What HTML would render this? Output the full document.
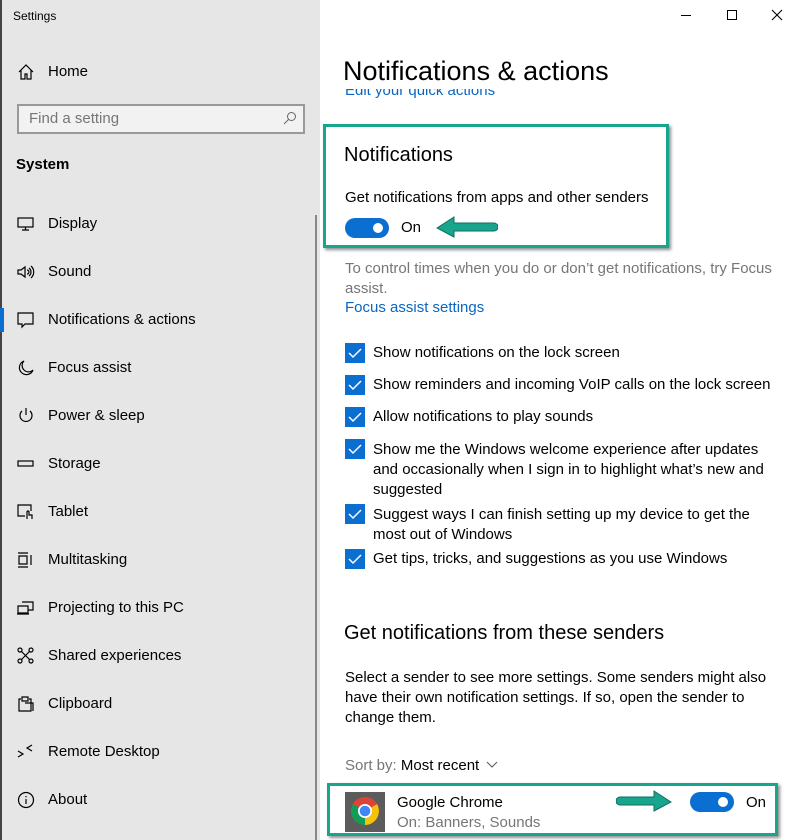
<!DOCTYPE html>
<html><head><meta charset="utf-8"><style>
*{margin:0;padding:0;box-sizing:border-box}
body{width:799px;height:840px;overflow:hidden;background:#fff;font-family:"Liberation Sans",sans-serif;color:#000;position:relative}
.a{position:absolute;white-space:nowrap}
#side{position:absolute;left:0;top:0;width:320px;height:840px;background:#e6e6e6;box-shadow:inset 2px 0 0 #444}
.it{position:absolute;left:48px;font-size:15px;color:#000}
.ic{position:absolute;left:17px;width:18px;height:18px}
.t{font-size:15px;color:#000}
.cb{position:absolute;left:345px;width:20px;height:20px;background:#0a6fd1}
.g{color:#767676}
.l{color:#0a66c2}
.tog{position:absolute;width:44px;height:20px;border-radius:10px;background:#0a6fd1}
.tog:after{content:"";position:absolute;right:6px;top:5px;width:10px;height:10px;border-radius:5px;background:#fff}
</style></head><body>
<div id="side">
<div class="a" style="left:13px;top:9px;font-size:12px">Settings</div>
<svg class="ic" style="top:63px" viewBox="0 0 18 18" fill="none" stroke="#000" stroke-width="1.2"><path d="M2 9L9 2l7 7M4 7v9h4v-5h2v5h4V7"/></svg>
<div class="it" style="top:63px">Home</div>
<div class="a" style="left:17px;top:104px;width:288px;height:30px;border:2px solid #999;background:#f2f2f2"></div>
<div class="a g" style="left:29px;top:110px;font-size:15px">Find a setting</div>
<svg class="a" style="left:283px;top:111px" width="14" height="14" viewBox="0 0 14 14" fill="none" stroke="#666" stroke-width="1"><circle cx="8.5" cy="5.5" r="4"/><path d="M5.5 8.5L1 13"/></svg>
<div class="a" style="left:16px;top:156px;font-size:15px;font-weight:bold">System</div>
<div class="a" style="left:315px;top:215px;width:2px;height:625px;background:#888"></div>
<div class="a" style="left:0;top:308px;width:4px;height:24px;background:#0a6fd1"></div>
<svg class="ic" style="top:215px" viewBox="0 0 18 18" fill="none" stroke="#000" stroke-width="1.2"><rect x="1" y="3" width="15" height="9"/><path d="M8.5 12v3M5 15h7"/></svg><div class="it" style="top:215px">Display</div>
<svg class="ic" style="top:263px" viewBox="0 0 18 18" fill="none" stroke="#000" stroke-width="1.2"><path d="M1 7h3l4-3v10l-4-3H1zM10 7a2 2 0 010 4M12 5a5 5 0 010 8M14 3a8 8 0 010 12"/></svg><div class="it" style="top:263px">Sound</div>
<svg class="ic" style="top:311px" viewBox="0 0 18 18" fill="none" stroke="#000" stroke-width="1.2"><path d="M1 2h15v11H8l-3 3v-3H1z"/></svg><div class="it" style="top:311px">Notifications &amp; actions</div>
<svg class="ic" style="top:359px" viewBox="0 0 18 18" fill="none" stroke="#000" stroke-width="1.2"><path d="M7 2a7 7 0 109 9A6 6 0 017 2z"/></svg><div class="it" style="top:359px">Focus assist</div>
<svg class="ic" style="top:407px" viewBox="0 0 18 18" fill="none" stroke="#000" stroke-width="1.2"><path d="M9 1v7M5 4a6 6 0 108 0"/></svg><div class="it" style="top:407px">Power &amp; sleep</div>
<svg class="ic" style="top:455px" viewBox="0 0 18 18" fill="none" stroke="#000" stroke-width="1.2"><rect x="1" y="6" width="15" height="5"/></svg><div class="it" style="top:455px">Storage</div>
<svg class="ic" style="top:503px" viewBox="0 0 18 18" fill="none" stroke="#000" stroke-width="1.2"><path d="M8 13H1V2h13v6M10 16V9a1 1 0 012 0v3h3v4"/></svg><div class="it" style="top:503px">Tablet</div>
<svg class="ic" style="top:551px" viewBox="0 0 18 18" fill="none" stroke="#000" stroke-width="1.2"><path d="M1 2h10M1 16h10M2 5h8v8H2zM14 4v10"/></svg><div class="it" style="top:551px">Multitasking</div>
<svg class="ic" style="top:599px" viewBox="0 0 18 18" fill="none" stroke="#000" stroke-width="1.2"><path d="M5 3h11v8h-5M1 7h10v7H1zM0 15h12"/></svg><div class="it" style="top:599px">Projecting to this PC</div>
<svg class="ic" style="top:647px" viewBox="0 0 18 18" fill="none" stroke="#000" stroke-width="1.2"><circle cx="3" cy="3" r="2"/><circle cx="14" cy="3" r="2"/><circle cx="3" cy="14" r="2"/><circle cx="14" cy="14" r="2"/><path d="M4.5 4.5l8 8M12.5 4.5l-8 8"/></svg><div class="it" style="top:647px">Shared experiences</div>
<svg class="ic" style="top:695px" viewBox="0 0 18 18" fill="none" stroke="#000" stroke-width="1.2"><path d="M4 4H2v12h12V4h-2M5 2h6v4H5zM8 8h8v8"/></svg><div class="it" style="top:695px">Clipboard</div>
<svg class="ic" style="top:743px" viewBox="0 0 18 18" fill="none" stroke="#000" stroke-width="1.2"><path d="M1 8l5 3-5 3M15 2l-5 3 5 3"/></svg><div class="it" style="top:743px">Remote Desktop</div>
<svg class="ic" style="top:791px" viewBox="0 0 18 18" fill="none" stroke="#000" stroke-width="1.2"><circle cx="9" cy="9" r="7.5"/><path d="M9 8v5M9 5v1.3"/></svg><div class="it" style="top:791px">About</div>
</div>
<div class="a" style="left:681px;top:15px;width:10px;height:1px;background:#000"></div>
<div class="a" style="left:727px;top:10px;width:10px;height:10px;border:1px solid #000"></div>
<svg class="a" style="left:771px;top:9px" width="12" height="12" viewBox="0 0 12 12" stroke="#000" stroke-width="1.1"><path d="M1 1l10 10M11 1L1 11"/></svg>

<div class="a" style="left:345px;top:89px;width:200px;height:11px;overflow:hidden"><div class="a l" style="left:0;top:-7px;font-size:15px">Edit your quick actions</div></div>
<div class="a" style="left:343px;top:56px;font-size:27px">Notifications &amp; actions</div>

<div class="a" style="left:323px;top:124px;width:346px;height:124px;border:3px solid #17a58d;box-shadow:2px 2px 3px rgba(0,0,0,.45)"></div>
<div class="a" style="left:344px;top:144px;font-size:20px">Notifications</div>
<div class="a t" style="left:345px;top:189px">Get notifications from apps and other senders</div>
<div class="tog" style="left:345px;top:218px"></div>
<div class="a t" style="left:401px;top:219px">On</div>
<svg class="a" style="left:434px;top:214px" width="64" height="28" viewBox="0 0 64 28"><path d="M3 14L20 3v6h40a3 3 0 010 8H20v6z" fill="#17a58d" stroke="#0d6e5e" stroke-width="1"/></svg>

<div class="a g" style="left:345px;top:259px;font-size:15px;line-height:20px">To control times when you do or don’t get notifications, try Focus<br>assist.</div>
<div class="a l" style="left:345px;top:299px;font-size:15px">Focus assist settings</div>

<div class="cb" style="top:343px"></div><div class="a t" style="left:373px;top:344px">Show notifications on the lock screen</div>
<div class="cb" style="top:375px"></div><div class="a t" style="left:373px;top:376px">Show reminders and incoming VoIP calls on the lock screen</div>
<div class="cb" style="top:407px"></div><div class="a t" style="left:373px;top:408px">Allow notifications to play sounds</div>
<div class="cb" style="top:439px"></div><div class="a t" style="left:373px;top:440px;line-height:20px">Show me the Windows welcome experience after updates<br>and occasionally when I sign in to highlight what’s new and<br>suggested</div>
<div class="cb" style="top:504px"></div><div class="a t" style="left:373px;top:505px;line-height:20px">Suggest ways I can finish setting up my device to get the<br>most out of Windows</div>
<div class="cb" style="top:549px"></div><div class="a t" style="left:373px;top:550px">Get tips, tricks, and suggestions as you use Windows</div>
<svg class="a" style="left:345px;top:343px" width="20" height="226" viewBox="0 0 20 226" fill="none" stroke="#fff" stroke-width="1.5">
<path d="M4 10l4 4 8-8"/><path transform="translate(0,32)" d="M4 10l4 4 8-8"/><path transform="translate(0,64)" d="M4 10l4 4 8-8"/><path transform="translate(0,96)" d="M4 10l4 4 8-8"/><path transform="translate(0,161)" d="M4 10l4 4 8-8"/><path transform="translate(0,206)" d="M4 10l4 4 8-8"/></svg>

<div class="a" style="left:344px;top:622px;font-size:20px">Get notifications from these senders</div>
<div class="a t" style="left:345px;top:668px;line-height:20px">Select a sender to see more settings. Some senders might also<br>have their own notification settings. If so, open the sender to<br>change them.</div>
<div class="a t" style="left:345px;top:757px"><span class="g">Sort by:</span> Most recent</div>
<svg class="a" style="left:486px;top:761px" width="12" height="8" viewBox="0 0 12 8" fill="none" stroke="#555"><path d="M1 1l5 5 5-5"/></svg>

<div class="a" style="left:327px;top:783px;width:451px;height:53px;border:3px solid #17a58d;box-shadow:2px 2px 3px rgba(0,0,0,.45)"></div>
<div class="a" style="left:345px;top:792px;width:40px;height:40px;background:#5c5c5c"></div>
<svg class="a" style="left:350px;top:796px" width="30" height="30" viewBox="0 0 30 30"><circle cx="15" cy="15" r="14" fill="#db4437"/><path d="M15 15L27 8A14 14 0 0115 29z" fill="#f4c20d"/><path d="M15 15L15 29A14 14 0 013 8z" fill="#0f9d58"/><path d="M15 15L3 8A14 14 0 0127 8z" fill="#db4437"/><circle cx="15" cy="15" r="7" fill="#fff"/><circle cx="15" cy="15" r="5.3" fill="#4285f4"/></svg>
<div class="a t" style="left:397px;top:794px">Google Chrome</div>
<div class="a g" style="left:397px;top:814px;font-size:15px">On: Banners, Sounds</div>
<svg class="a" style="left:616px;top:788px" width="58" height="28" viewBox="0 0 58 28"><path d="M55 14L38 3v6H4a3 3 0 000 8h34v6z" fill="#17a58d" stroke="#0d6e5e" stroke-width="1"/></svg>
<div class="tog" style="left:690px;top:792px"></div>
<div class="a t" style="left:746px;top:794px">On</div>
</body></html>
